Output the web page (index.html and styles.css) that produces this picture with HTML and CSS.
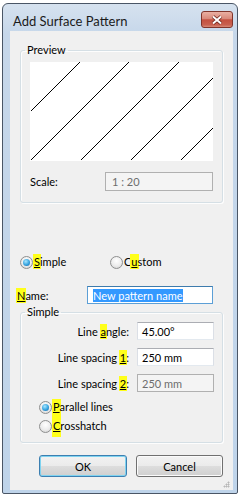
FILE: index.html
```html
<!DOCTYPE html>
<html>
<head>
<meta charset="utf-8">
<title>Add Surface Pattern</title>
<link rel="stylesheet" href="styles.css">
</head>
<body>
<div class="window">
  <div class="titlebar">
    <span class="title">Add Surface Pattern</span>
    <span class="close">
      <svg width="12" height="10" viewBox="0 0 12 10"><path d="M2 1.5L10 8.5M10 1.5L2 8.5" stroke="#6a2218" stroke-width="3.6"/><path d="M2 1.5L10 8.5M10 1.5L2 8.5" stroke="#fff" stroke-width="2"/></svg>
    </span>
  </div>
  <div class="content">
    <fieldset class="group preview-group">
      <legend>Preview</legend>
      <div class="preview">
        <svg width="183" height="99" viewBox="0 0 183 99">
          <path d="M0.5 49.5L49.5 0.5M0.5 98.5L98.5 0.5M50.5 98.5L148.5 0.5M100.5 98.5L182.5 16.5M150.5 98.5L182.5 66.5" stroke="#000" stroke-width="1" fill="none"/>
        </svg>
      </div>
      <div class="scale-row">
        <span class="scale-label">Scale:</span>
        <span class="field disabled scale-field">1 : 20</span>
      </div>
    </fieldset>

    <div class="type-row">
      <span class="radio-item simple-item"><span class="radio checked"></span><span class="rtext"><span class="mn">S</span>imple</span></span>
      <span class="radio-item"><span class="radio"></span><span class="rtext">C<span class="mn">u</span>stom</span></span>
    </div>

    <div class="name-row">
      <span class="name-label"><span class="mn">N</span>ame:</span>
      <span class="field focused name-field"><span class="sel">New pattern name</span></span>
    </div>

    <fieldset class="group simple-group">
      <legend>Simple</legend>
      <div class="form-row">
        <span class="flabel">Line <span class="mn">a</span>ngle:</span>
        <span class="field small-field">45.00°</span>
      </div>
      <div class="form-row">
        <span class="flabel">Line spacing <span class="mn">1</span>:</span>
        <span class="field small-field">250 mm</span>
      </div>
      <div class="form-row">
        <span class="flabel">Line spacing <span class="mn">2</span>:</span>
        <span class="field small-field disabled">250 mm</span>
      </div>
      <div class="radio-item opt-row first-opt"><span class="radio checked"></span><span class="rtext"><span class="mn mn-p">P</span>arallel lines</span></div>
      <div class="radio-item opt-row"><span class="radio"></span><span class="rtext"><span class="mn mn-c">C</span>rosshatch</span></div>
    </fieldset>

    <div class="buttons">
      <span class="btn default">OK</span>
      <span class="btn cancel">Cancel</span>
    </div>
    <span class="grip"></span>
  </div>
</div>
</body>
</html>
```
FILE: styles.css
```css
* { box-sizing: border-box; }

body {
  margin: 0;
  background: #ffffff;
  font-family: Lato, "Noto Sans", sans-serif;
  font-size: 11px;
  color: #000;
}

.window {
  margin: 3px 0 0 2px;
  width: 236px;
  height: 491px;
  border: 1px solid #4a5666;
  border-radius: 6px 6px 2px 2px;
  background: linear-gradient(#d6e2ef, #c6d7ea 30px, #bfd4ea);
  padding: 0 4px 3px 7px;
  display: flex;
  flex-direction: column;
}

.titlebar {
  flex: none;
  height: 27px;
  display: flex;
  justify-content: space-between;
  align-items: flex-start;
}

.title {
  margin: 9px 0 0 3px;
  font-size: 13px;
  line-height: 16px;
  color: #1a1a1a;
}

.close {
  margin-top: 7px;
  width: 32px;
  height: 17px;
  border: 1px solid #81352b;
  border-radius: 3px;
  background: linear-gradient(#eab0a3, #d9897a 45%, #c4503f 52%, #c8604f 85%, #d88a77);
  display: flex;
  align-items: center;
  justify-content: center;
}

.content {
  flex: 1;
  background: #f0f0f0;
  display: flex;
  flex-direction: column;
  position: relative;
}

.group {
  margin: 12px 10px 0;
  border: 1px solid #d5dfe5;
  border-radius: 3px;
  box-shadow: inset 1px 1px #fdfdfd, 1px 1px #fdfdfd;
  min-width: 0;
}

.group legend {
  padding: 0 2px;
  margin-left: -5px;
  line-height: 14px;
}

.preview-group {
  padding: 5px 9px 11px 9px;
}

.preview {
  width: 183px;
  height: 99px;
  background: #fff;
}

.preview svg { display: block; shape-rendering: crispEdges; }

.scale-row {
  margin-top: 11px;
  display: flex;
  align-items: center;
}

.scale-label {
  width: 75px;
}

.field {
  height: 19px;
  background: #fff;
  border: 1px solid #dbdfe6;
  border-top-color: #abadb3;
  border-bottom-color: #e3e9ef;
  display: flex;
  align-items: center;
  white-space: nowrap;
}

.field.disabled {
  background: #f4f4f4;
  border-color: #b0b0b0;
  color: #6d6d6d;
}

.scale-field {
  width: 108px;
  padding-left: 6px;
}

.type-row {
  margin: 51px 0 0 10px;
  display: flex;
  align-items: center;
  height: 16px;
}

.radio-item {
  display: flex;
  align-items: center;
  gap: 1px;
}

.simple-item { width: 90px; }

.radio {
  width: 13px;
  height: 13px;
  border-radius: 50%;
  border: 1px solid #8e8f8f;
  background: radial-gradient(circle at 50% 35%, #ffffff, #ececec 55%, #cfcfcf);
  position: relative;
  flex: none;
}

.radio.checked::after {
  content: "";
  position: absolute;
  left: 2px;
  top: 2px;
  width: 7px;
  height: 7px;
  border-radius: 50%;
  background: radial-gradient(circle at 40% 35%, #a7e6ff, #35a3df 55%, #155c9c);
}

.rtext { line-height: 16px; }

.mn {
  background: #ffff1a;
  text-decoration: underline;
  padding: 1px 1px;
  margin: 0 -1px;
}

.name-row {
  margin: 16px 20px 0 7px;
  display: flex;
  align-items: center;
}

.name-label { flex: 1; }

.name-field {
  width: 126px;
  height: 18px;
  padding-left: 5px;
}

.field.focused {
  border-color: #5c9fd6;
  border-top-color: #3d7bad;
}

.sel {
  background: #3399ff;
  color: #fff;
  line-height: 13px;
}

.simple-group {
  margin-top: 1px;
  padding: 3px 8px 8px 9px;
}

.form-row {
  display: flex;
  justify-content: flex-end;
  align-items: center;
  gap: 8px;
  margin-bottom: 8px;
}

.small-field {
  width: 77px;
  height: 18px;
  padding-left: 4px;
}

.opt-row {
  margin-left: 9px;
  height: 16px;
  margin-top: 3px;
}

.first-opt { margin-top: -1px; }

.mn-p { padding-bottom: 10px; }
.mn-c { padding-bottom: 5px; }

.buttons {
  margin: 12px 10px 0 0;
  display: flex;
  justify-content: flex-end;
  gap: 9px;
}

.btn {
  width: 87px;
  height: 22px;
  border: 1px solid #707070;
  border-radius: 3px;
  background: linear-gradient(#f2f2f2, #ebebeb 48%, #dddddd 52%, #cfcfcf);
  box-shadow: inset 0 0 0 1px #fbfbfb;
  display: flex;
  align-items: center;
  justify-content: center;
}

.btn.default {
  width: 88px;
  border-color: #3c7fb1;
  box-shadow: inset 0 0 0 1px #7fd3f0;
}

.grip {
  position: absolute;
  right: 3px;
  bottom: 2px;
  width: 7px;
  height: 7px;
  background:
    radial-gradient(circle at 5.5px 1.5px, #b8b8b8 0.9px, transparent 1.1px),
    radial-gradient(circle at 3.5px 3.5px, #b8b8b8 0.9px, transparent 1.1px),
    radial-gradient(circle at 5.5px 3.5px, #b8b8b8 0.9px, transparent 1.1px),
    radial-gradient(circle at 1.5px 5.5px, #b8b8b8 0.9px, transparent 1.1px),
    radial-gradient(circle at 3.5px 5.5px, #b8b8b8 0.9px, transparent 1.1px),
    radial-gradient(circle at 5.5px 5.5px, #b8b8b8 0.9px, transparent 1.1px);
}
```
